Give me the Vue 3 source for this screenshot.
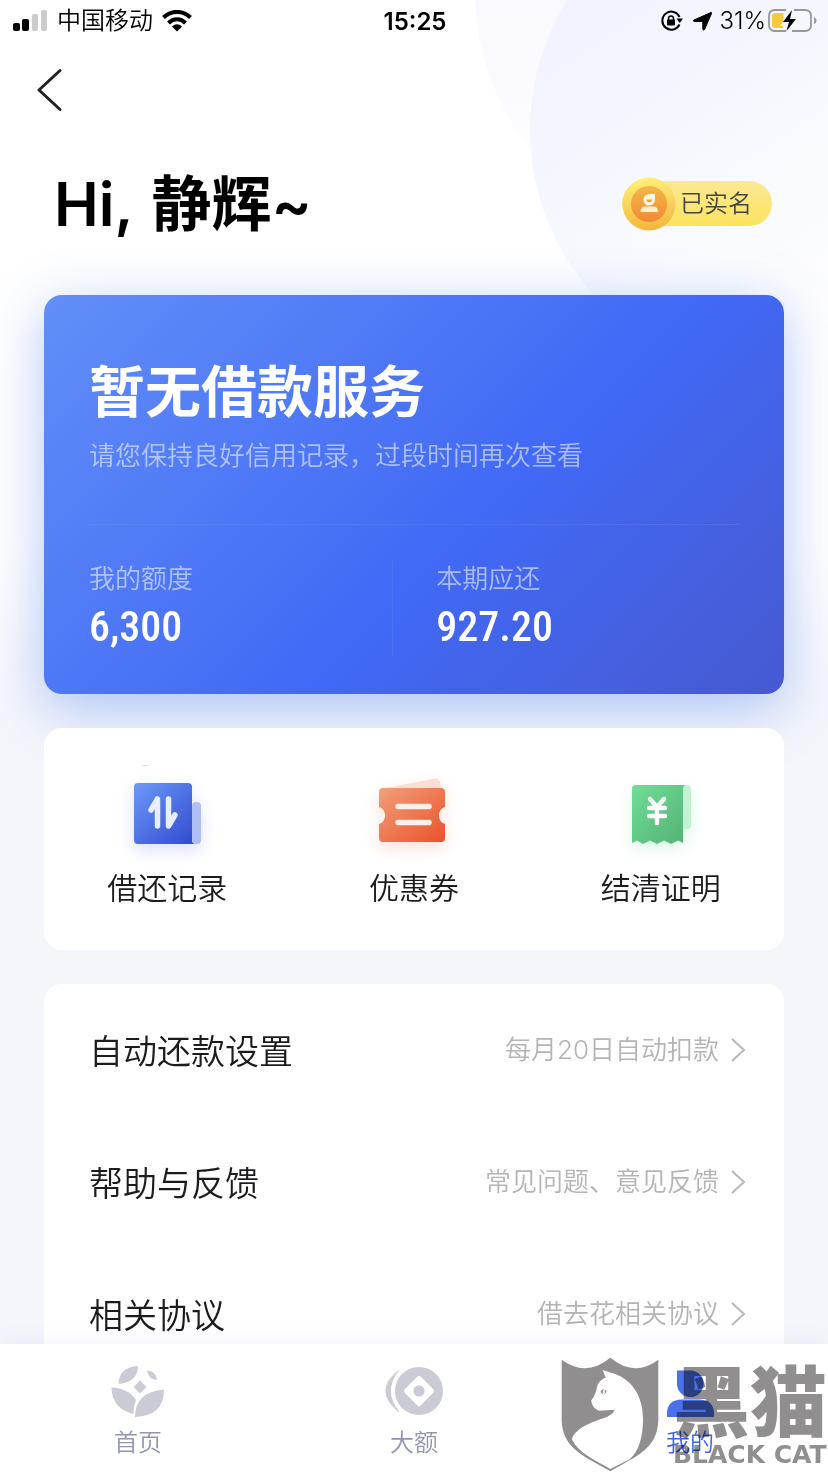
<template>
  <div class="app">
    <main class="content">
      <svg class="hero-bg" viewBox="0 0 400 420" aria-hidden="true">
        <defs>
          <linearGradient id="ringBack" x1="0" y1="0" x2="0" y2="1">
            <stop offset="0.5" stop-color="#f8f8fe" />
            <stop offset="0.85" stop-color="#fefeff" />
          </linearGradient>
          <linearGradient id="ringFront" x1="0.1" y1="0.2" x2="0.6" y2="0.95">
            <stop offset="0" stop-color="#f1f2fe" />
            <stop offset="0.45" stop-color="#f6f8fe" />
            <stop offset="1" stop-color="#ffffff" />
          </linearGradient>
        </defs>
        <circle cx="307" cy="-10" r="260" fill="url(#ringBack)" />
        <circle cx="347" cy="130" r="245" fill="url(#ringFront)" />
      </svg>

      <div class="status-bar">
        <div class="status-left">
          <svg width="35" height="22" viewBox="0 0 35 22">
            <rect x="0" y="13" width="7" height="8" rx="2" />
            <rect x="9" y="9" width="7" height="12" rx="2" />
            <rect x="19" y="4" width="6" height="17" rx="2" fill="#cbcbcb" />
            <rect x="28" y="0" width="6" height="21" rx="2" fill="#cbcbcb" />
          </svg>
          <span class="carrier">中国移动</span>
          <svg width="30" height="22" viewBox="0 0 30 22" fill="none" stroke="#000" stroke-width="4">
            <path d="M1.5 7.5 C9 0 21 0 28.5 7.5" />
            <path d="M6.5 13 C11.5 8 18.5 8 23.5 13" />
            <path d="M10 16.5 Q15 12 20 16.5 L15 21.5 Z" fill="#000" stroke="none" />
          </svg>
        </div>
        <span class="clock">15:25</span>
        <div class="status-right">
          <svg width="22" height="22" viewBox="0 0 22 22">
            <path d="M18.5 14.5 A9 9 0 1 1 18.6 7" fill="none" stroke="#000" stroke-width="2" />
            <path d="M15.5 8.5 H22 L18.8 13 Z" />
            <rect x="6" y="9.5" width="8" height="6" rx="1" />
            <path d="M7.5 10 V8.5 A2.5 2.5 0 0 1 12.5 8.5 V10" fill="none" stroke="#000" stroke-width="1.5" />
          </svg>
          <svg class="location" width="19" height="19" viewBox="0 0 19 19">
            <path d="M18 0.5 Q19 0.3 18.5 1.5 L11.5 17.5 Q10.3 19 9.8 17 V9.5 H1.5 Q-0.5 9 1 8 Z" stroke="#000" stroke-linejoin="round" />
          </svg>
          <span class="percent">31%</span>
          <svg width="49" height="24" viewBox="0 0 49 24">
            <path d="M18 1 H7 Q1 1 1 7 V16 Q1 22 7 22 H18 M24 22 H37 Q43 22 43 16 V7 Q43 1 37 1 H26" fill="none" stroke="#98989c" stroke-width="1.8" />
            <path d="M46 8 Q48.5 9 48.5 11.5 Q48.5 14 46 15 Z" fill="#98989c" />
            <path d="M7 4 H15.5 V12 L12 17 H15 V19 H7 Q4 19 4 16 V7 Q4 4 7 4 Z" fill="#f8c83f" />
            <path d="M24 1 L15 13 H21 L18.5 22 L28 10 H22 Z" />
          </svg>
        </div>
      </div>

      <header class="nav">
        <button class="back" type="button" aria-label="返回">
          <svg width="26" height="44" viewBox="0 0 26 44" fill="none" stroke="#222" stroke-width="3" stroke-linecap="round" stroke-linejoin="round">
            <path d="M23 2.5 L2 22 L23 41.5" />
          </svg>
        </button>
      </header>

      <section class="greeting">
        <h1>Hi, <span class="name">静辉</span>~</h1>
        <div class="verified">
          <svg class="coin" width="54" height="54" viewBox="0 0 54 54">
            <defs>
              <linearGradient id="coinOuter" x1="0.4" y1="0" x2="0.5" y2="1">
                <stop offset="0" stop-color="#fff07a" />
                <stop offset="1" stop-color="#f3b63c" />
              </linearGradient>
              <linearGradient id="coinInner" x1="0" y1="0" x2="0" y2="1">
                <stop offset="0" stop-color="#f4b846" />
                <stop offset="1" stop-color="#f08a35" />
              </linearGradient>
            </defs>
            <circle cx="27" cy="27" r="26.5" fill="url(#coinOuter)" />
            <circle cx="27" cy="27" r="18" fill="url(#coinInner)" />
            <path d="M33 17 V22.5 A5.8 5.8 0 1 1 27.5 17 Z" fill="#fff6dc" />
            <path d="M24.5 22.5 H30 A2.7 2.7 0 0 1 24.5 22.5 Z" fill="#f2a03d" />
            <path d="M18.5 35 Q18.5 29.5 23 29.5 H31.5 Q36 29.5 36 35 Z" fill="#fff1cc" />
          </svg>
          <span>已实名</span>
        </div>
      </section>

      <section class="loan-card">
        <h2>暂无借款服务</h2>
        <p class="tip">请您保持良好信用记录，过段时间再次查看</p>
        <div class="stats">
          <div v-for="item in stats" :key="item.label" class="stat">
            <div class="stat-label">{{ item.label }}</div>
            <div class="stat-value">{{ item.value }}</div>
          </div>
        </div>
      </section>

      <section class="actions">
        <button v-for="item in actions" :key="item.key" class="action" type="button">
          <svg v-if="item.key === 'record'" class="action-icon record" viewBox="0 0 100 90">
            <defs>
              <linearGradient id="recordFill" x1="0" y1="0" x2="1" y2="1">
                <stop offset="0" stop-color="#6c9af8" />
                <stop offset="1" stop-color="#3148cf" />
              </linearGradient>
            </defs>
            <path d="M24 -4 Q28.5 -6 33 -4 Z" fill="#f6dc9a" />
            <path d="M21 13 H71 Q75 13 75 17 V70 Q75 74 79 74 H21 Q17 74 17 70 V17 Q17 13 21 13 Z" fill="url(#recordFill)" />
            <rect x="75" y="32" width="9" height="42" rx="4" fill="#afbff5" />
            <g fill="none" stroke="#e8eefe" stroke-width="5.5" stroke-linecap="round" stroke-linejoin="round">
              <path d="M34 40 L40.5 29 V56" />
              <path d="M51.5 29 V56 L58 45" />
            </g>
          </svg>
          <svg v-else-if="item.key === 'coupon'" class="action-icon coupon" viewBox="0 0 100 90">
            <defs>
              <linearGradient id="couponFill" x1="0" y1="0" x2="1" y2="1">
                <stop offset="0" stop-color="#f2a07a" />
                <stop offset="1" stop-color="#e9522b" />
              </linearGradient>
            </defs>
            <path d="M17 19 L71 8.5 Q75 8 76 12 L78 22 Z" fill="#fadfd4" />
            <path d="M19 18 H77 Q81 18 81 22 V37 A9 9 0 0 0 81 54 V68 Q81 72 77 72 H19 Q15 72 15 68 V54 A9 9 0 0 0 15 37 V22 Q15 18 19 18 Z" fill="url(#couponFill)" />
            <path d="M34 36.5 H65 M34 52.5 H65" stroke="#fdeee8" stroke-width="5.5" stroke-linecap="round" />
          </svg>
          <svg v-else class="action-icon proof" viewBox="0 0 100 90">
            <defs>
              <linearGradient id="proofFill" x1="0" y1="0" x2="1" y2="1">
                <stop offset="0" stop-color="#6fdf97" />
                <stop offset="1" stop-color="#54b075" />
              </linearGradient>
            </defs>
            <path d="M25 15 H76 Q72 15 72 20 V73 L67 70.5 L60 74 L53 70.5 L46 74 L39 70.5 L32 74 L26 70.5 L21 73 V19 Q21 15 25 15 Z" fill="url(#proofFill)" />
            <path d="M72 20 Q72 15 76 15 Q80 15 80 20 V55 Q80 59 76 59 H72 Z" fill="#c4f1d2" />
            <path d="M39 29 L46 37 L53 29 M46 37 V53 M38 38 H54 M38 46 H54" fill="none" stroke="#fff" stroke-width="4.4" stroke-linecap="round" stroke-linejoin="round" />
          </svg>
          <span>{{ item.label }}</span>
        </button>
      </section>

      <section class="menu">
        <a v-for="item in menu" :key="item.title" class="menu-row" href="#">
          <span class="menu-title">{{ item.title }}</span>
          <span class="menu-note">{{ item.note }}</span>
          <svg width="14" height="24" viewBox="0 0 14 24" fill="none" stroke="#b9b9b9" stroke-width="2">
            <path d="M1 1 L13 12 L1 23" />
          </svg>
        </a>
      </section>
    </main>

    <nav class="tab-bar">
      <a
        v-for="tab in tabs"
        :key="tab.key"
        class="tab"
        :class="{ active: tab.key === current }"
        href="#"
        @click.prevent="current = tab.key"
      >
        <svg v-if="tab.key === 'home'" width="60" height="60" viewBox="0 0 60 60" fill="#cbcbd5">
          <path d="M30 4 Q30 20 10.5 22 Q11 5 30 4 Z" />
          <path d="M39 8.5 Q48 9 49 18 Q41 18 39 8.5 Z" />
          <path d="M32 18.5 L38.5 25 L32 31.500 L25.5 25 Z" />
          <path d="M3.5 25.500 Q20 26 28 38 Q25 45 25.5 52 Q4 47 3.5 25.500 Z" />
          <path d="M56 27.500 Q56 54 27 55 Q27 30 56 27.500 Z" />
        </svg>
        <svg v-else-if="tab.key === 'large'" width="60" height="60" viewBox="0 0 60 60" fill="#cbcbd5">
          <path d="M14.5 8.500 Q-11 29 15 50 Q-2 29 14.5 8.500 Z" stroke="#cbcbd5" stroke-linejoin="round" />
          <circle cx="35" cy="29" r="24" />
          <path d="M35 16.500 L47.500 29 L35 41.500 L22.500 29 Z" fill="#fff" stroke="#fff" stroke-width="5" stroke-linejoin="round" />
          <circle cx="35" cy="29" r="5.700" />
        </svg>
        <svg v-else width="60" height="60" viewBox="0 0 60 60">
          <path d="M17 8.500 H30.500 A13.300 13.300 0 1 1 17 21.500 Z" fill="#4a70ea" />
          <path d="M7 55 V52 Q7 37.500 22 37.500 H39 Q54 37.500 54 52 V55 Z" fill="#4a70ea" />
        </svg>
        <span>{{ tab.label }}</span>
      </a>

      <div class="watermark">
        <svg width="98" height="115" viewBox="56 50 294 345">
          <path d="M58 58 Q131 112 204 52 Q277 112 348 58 V240 C345 328 280 348 204 393 C128 348 61 328 58 240 Z" fill="#908e8e" />
          <path d="M181 89 L206 97 C266 112 302 165 302 235 C302 290 290 332 262 357 L204 386 C160 360 110 340 88 297 C100 262 150 245 185 233 C204 226 213 218 217 208 L170 211 C154 206 147 192 147 180 C160 162 162 150 164 140 C168 124 178 116 190 112 Z" fill="#fff" />
          <path d="M175 155 Q176 147 185 147 Q179 153 181 161 Q176 160 175 155 Z M187 148 L193 151 Q192 158 186 161 Q190 154 187 148 Z" fill="#908e8e" />
        </svg>
        <div class="watermark-text">
          <span class="brand-cn">黑猫</span>
          <span class="brand-en">BLACK CAT</span>
        </div>
      </div>
    </nav>
  </div>
</template>

<script setup>
import { ref } from 'vue'

const current = ref('mine')

const stats = [
  { label: '我的额度', value: '6,300' },
  { label: '本期应还', value: '927.20' }
]

const actions = [
  { key: 'record', label: '借还记录' },
  { key: 'coupon', label: '优惠券' },
  { key: 'proof', label: '结清证明' }
]

const menu = [
  { title: '自动还款设置', note: '每月20日自动扣款' },
  { title: '帮助与反馈', note: '常见问题、意见反馈' },
  { title: '相关协议', note: '借去花相关协议' }
]

const tabs = [
  { key: 'home', label: '首页' },
  { key: 'large', label: '大额' },
  { key: 'mine', label: '我的' }
]
</script>

<style>
body {
  margin: 0;
  background: #f4f6fb;
}
</style>

<style scoped>
.app {
  height: 100vh;
  display: flex;
  flex-direction: column;
  overflow: hidden;
  font-family: Inter, "Noto Sans CJK SC", sans-serif;
  font-weight: 350;
  color: #1c1c1e;
}

.app svg {
  display: block;
  flex: none;
}

button {
  border: 0;
  padding: 0;
  background: none;
  font: inherit;
  color: inherit;
}

a {
  color: inherit;
  text-decoration: none;
}

.content {
  position: relative;
  flex: 1;
  min-height: 0;
  overflow: auto;
  scrollbar-width: none;
  background: linear-gradient(#fff 540px, #f4f6fb 700px);
}

.hero-bg {
  position: absolute;
  top: 0;
  right: 0;
  width: 400px;
  height: 420px;
}

/* 状态栏 */
.status-bar {
  position: relative;
  display: grid;
  grid-template-columns: 1fr auto 1fr;
  align-items: center;
  height: 42px;
  padding: 0 11px 0 13px;
  color: #000;
}

.status-left,
.status-right {
  display: flex;
  align-items: center;
}

.status-left {
  gap: 9px;
}

.status-right {
  justify-content: flex-end;
  gap: 2px;
}

.location {
  margin: 0 6px 0 8px;
}

.carrier,
.percent {
  font-size: 24px;
  line-height: 32px;
}

.clock {
  font-size: 24px;
  font-weight: 600;
}

.nav {
  position: relative;
  padding: 26px 37px 0;
}

.back {
  display: block;
}

/* 问候 */
.greeting {
  position: relative;
  display: flex;
  align-items: center;
  justify-content: space-between;
  height: 183px;
  padding: 0 56px 0 54px;
}

.greeting h1 {
  margin: 0;
  font-size: 60px;
  font-weight: 600;
  line-height: 84px;
  color: #000;
}

.name {
  margin-left: 4px;
}

.verified {
  display: flex;
  align-items: center;
  height: 45px;
  padding-right: 20px;
  border-radius: 23px;
  background: linear-gradient(#fbe993, #fbe35f);
  font-size: 24px;
  line-height: 40px;
  color: #444;
}

.coin {
  margin-right: 4px;
}

/* 额度卡片 */
.loan-card {
  position: relative;
  margin: 0 44px;
  padding: 57px 45px 39px;
  border-radius: 18px;
  background: linear-gradient(135deg, #628ef8 0%, #4169f5 58%, #4759d0 100%);
  box-shadow: 0 14px 56px rgba(70, 120, 235, 0.42);
  color: #fff;
}

.loan-card h2 {
  margin: 0;
  font-size: 56px;
  font-weight: 700;
  line-height: 80px;
}

.tip {
  margin: 0 0 44px;
  font-size: 26px;
  line-height: 48px;
  color: rgba(255, 255, 255, 0.55);
}

.stats {
  display: grid;
  grid-template-columns: 7fr 8fr;
  padding-top: 34px;
  border-top: 1px solid rgba(255, 255, 255, 0.08);
}

.stat + .stat {
  padding-left: 43px;
  border-left: 1px solid rgba(255, 255, 255, 0.06);
}

.stat-label {
  font-size: 26px;
  line-height: 40px;
  color: rgba(255, 255, 255, 0.55);
}

.stat-value {
  font-family: "Roboto Condensed", Roboto, sans-serif;
  font-size: 42px;
  font-weight: 500;
  line-height: 56px;
}

/* 快捷入口 */
.actions {
  position: relative;
  display: grid;
  grid-template-columns: repeat(3, 1fr);
  margin: 34px 44px 0;
  padding: 42px 0 40px;
  border-radius: 18px;
  background: #fff;
}

.action {
  display: flex;
  flex-direction: column;
  align-items: center;
  gap: 6px;
  font-size: 30px;
  line-height: 44px;
}

.action-icon {
  width: 100px;
  height: 90px;
  overflow: visible;
}

.record {
  filter: drop-shadow(0 6px 8px rgba(80, 100, 240, 0.2));
}

.coupon {
  filter: drop-shadow(0 6px 8px rgba(240, 110, 60, 0.2));
}

.proof {
  filter: drop-shadow(0 6px 8px rgba(80, 210, 130, 0.2));
}

/* 菜单 */
.menu {
  position: relative;
  margin: 34px 44px 0;
  border-radius: 18px;
  background: #fff;
}

.menu-row {
  display: flex;
  align-items: center;
  height: 132px;
  padding: 0 39px 0 45px;
}

.menu-title {
  flex: 1;
  padding-bottom: 2px;
  font-size: 34px;
}

.menu-note {
  margin-right: 12px;
  padding-bottom: 6px;
  font-size: 26px;
  color: #b4b4b4;
}

/* 底部导航 */
.tab-bar {
  position: relative;
  display: grid;
  grid-template-columns: repeat(3, 1fr);
  height: 128px;
  background: #fff;
  box-shadow: 0 -2px 20px rgba(90, 100, 190, 0.08);
}

.tab {
  display: flex;
  flex-direction: column;
  align-items: center;
  gap: 4px;
  padding-top: 18px;
  font-size: 24px;
  line-height: 34px;
  color: #9294b0;
}

.tab.active {
  color: #3f62e8;
}

.watermark {
  position: absolute;
  right: 1px;
  bottom: 0;
  display: flex;
  align-items: center;
  gap: 14px;
  color: #908e8e;
  mix-blend-mode: multiply;
  pointer-events: none;
}

.watermark-text {
  display: flex;
  flex-direction: column;
}

.brand-cn {
  font-family: "Noto Sans CJK SC", sans-serif;
  font-size: 77px;
  font-weight: 900;
  line-height: 80px;
}

.brand-en {
  font-family: "DejaVu Sans", sans-serif;
  font-size: 25px;
  font-weight: 700;
  line-height: 34px;
}
</style>
